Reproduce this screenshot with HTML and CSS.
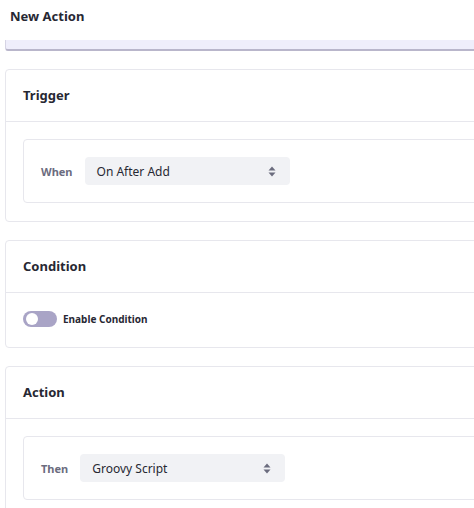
FILE: index.html
```html
<!DOCTYPE html>
<html>
<head>
<meta charset="utf-8">
<link rel="stylesheet" href="styles.css">
</head>
<body>
<div class="viewport">
<div class="page">
  <h1 class="page-title">New Action</h1>
  <div class="info-bar"></div>

  <section class="card">
    <div class="card-header"><h2>Trigger</h2></div>
    <div class="card-body">
      <div class="field-box">
        <span class="field-label">When</span>
        <div class="select">
          <span>On After Add</span>
          <svg class="caret" width="8" height="11" viewBox="0 0 8 11"><path d="M4 0.5 L7.5 4.5 H0.5 Z M4 10.5 L7.5 6.5 H0.5 Z" fill="#6b6c7e"/></svg>
        </div>
      </div>
    </div>
  </section>

  <section class="card">
    <div class="card-header"><h2>Condition</h2></div>
    <div class="card-body toggle-body">
      <span class="toggle"><span class="knob"></span></span>
      <span class="toggle-label">Enable Condition</span>
    </div>
  </section>

  <section class="card">
    <div class="card-header"><h2>Action</h2></div>
    <div class="card-body">
      <div class="field-box">
        <span class="field-label">Then</span>
        <div class="select">
          <span>Groovy Script</span>
          <svg class="caret" width="8" height="11" viewBox="0 0 8 11"><path d="M4 0.5 L7.5 4.5 H0.5 Z M4 10.5 L7.5 6.5 H0.5 Z" fill="#6b6c7e"/></svg>
        </div>
      </div>
    </div>
  </section>
</div>
</div>
</body>
</html>
```

FILE: styles.css
```css
html, body {
  margin: 0;
  padding: 0;
  background: #ffffff;
}
body {
  font-family: "Noto Sans", "Open Sans", "Liberation Sans", sans-serif;
  color: #272833;
}
.viewport {
  width: 100%;
  height: 508px;
  overflow: hidden;
}
.page {
  margin-right: -12px;
  padding: 0 0 0 5px;
}
.page-title {
  margin: 0;
  padding: 7px 0 0 5px;
  height: 32px;
  box-sizing: border-box;
  font-size: 13px;
  font-weight: 700;
  line-height: 18px;
}
.info-bar {
  margin-top: 8px;
  height: 9px;
  background: #efeefb;
  border-bottom: 2px solid #b9b6cb;
  border-left: 1px solid #d6d4e4;
  border-radius: 0 0 0 3px;
}
.card {
  margin-top: 18px;
  border: 1px solid #e7e7ed;
  border-radius: 4px;
  background: #fff;
}
.card-header {
  display: flex;
  align-items: center;
  padding: 0 0 2px 17px;
  border-bottom: 1px solid #e7e7ed;
  height: 49px;
}
.card-header h2 {
  margin: 0;
  font-size: 13px;
  font-weight: 700;
  line-height: 18px;
}
.card-body {
  padding: 17px 0 18px 17px;
}
.field-box {
  display: flex;
  align-items: center;
  height: 62px;
  padding-left: 17px;
  border: 1px solid #e7e7ed;
  border-radius: 4px;
}
.field-label {
  font-size: 11px;
  font-weight: 700;
  color: #6b6c7e;
  margin-right: 12px;
}
.select {
  width: 205px;
  height: 28px;
  box-sizing: border-box;
  display: flex;
  align-items: center;
  justify-content: space-between;
  padding: 0 14px 0 12px;
  background: #f1f2f5;
  border-radius: 4px;
  font-size: 12px;
  color: #272833;
}
.caret {
  display: block;
}
.toggle-body {
  display: flex;
  align-items: center;
  height: 16px;
  padding-top: 18px;
  padding-bottom: 20px;
}
.toggle {
  width: 34px;
  height: 16px;
  border-radius: 8px;
  background: #a9a4c6;
  position: relative;
  margin-right: 6px;
}
.knob {
  position: absolute;
  left: 3px;
  top: 2px;
  width: 12px;
  height: 12px;
  border-radius: 50%;
  background: #fff;
}
.toggle-label {
  font-size: 10px;
  font-weight: 700;
  line-height: 16px;
  color: #272833;
}
```
